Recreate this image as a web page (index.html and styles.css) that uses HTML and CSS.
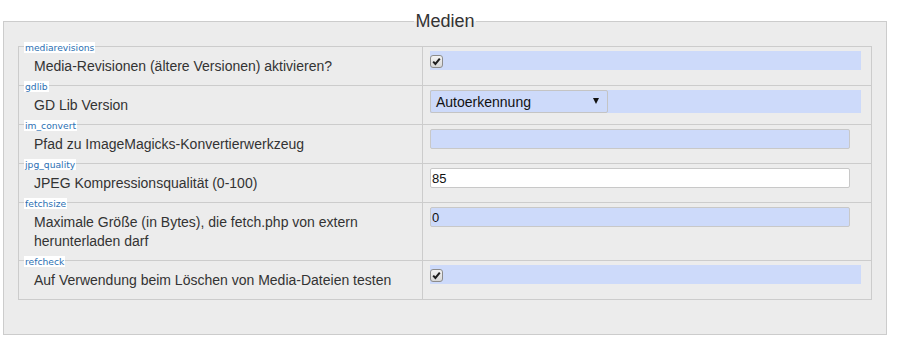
FILE: index.html
```html
<!DOCTYPE html>
<html lang="de">
<head>
<meta charset="utf-8">
<title>Medien</title>
<link rel="stylesheet" href="styles.css">
</head>
<body>
<fieldset class="panel">
  <legend class="title">Medien</legend>
  <table class="config">
    <colgroup><col class="col-label"><col class="col-value"></colgroup>
    <tr>
      <td class="label"><span class="key">mediarevisions</span><span class="text">Media-Revisionen (ältere Versionen) aktivieren?</span></td>
      <td class="value"><div class="band band-check"><span class="check"><svg width="13" height="13" viewBox="0 0 13 13"><defs><linearGradient id="cg" x1="0" y1="0" x2="0" y2="1"><stop offset="0" stop-color="#f4f4f4"/><stop offset="1" stop-color="#d6d6d6"/></linearGradient></defs><rect x="0.5" y="0.5" width="12" height="12" rx="2.5" fill="url(#cg)" stroke="#8c8c8c"/><path d="M3.2 6.6 L5.4 9 L9.8 3.6" fill="none" stroke="#1e1e1e" stroke-width="2"/></svg></span></div></td>
    </tr>
    <tr>
      <td class="label"><span class="key">gdlib</span><span class="text">GD Lib Version</span></td>
      <td class="value"><div class="band band-select"><span class="select"><span class="select-text">Autoerkennung</span><span class="arrow"></span></span></div></td>
    </tr>
    <tr>
      <td class="label"><span class="key">im_convert</span><span class="text">Pfad zu ImageMagicks-Konvertierwerkzeug</span></td>
      <td class="value"><input class="field field-default" type="text" value=""></td>
    </tr>
    <tr>
      <td class="label"><span class="key">jpg_quality</span><span class="text">JPEG Kompressionsqualität (0-100)</span></td>
      <td class="value"><input class="field" type="text" value="85"></td>
    </tr>
    <tr>
      <td class="label"><span class="key">fetchsize</span><span class="text">Maximale Größe (in Bytes), die fetch.php von extern herunterladen darf</span></td>
      <td class="value"><input class="field field-default" type="text" value="0"></td>
    </tr>
    <tr>
      <td class="label"><span class="key">refcheck</span><span class="text">Auf Verwendung beim Löschen von Media-Dateien testen</span></td>
      <td class="value"><div class="band band-check"><span class="check"><svg width="13" height="13" viewBox="0 0 13 13"><rect x="0.5" y="0.5" width="12" height="12" rx="2.5" fill="url(#cg)" stroke="#8c8c8c"/><path d="M3.2 6.6 L5.4 9 L9.8 3.6" fill="none" stroke="#1e1e1e" stroke-width="2"/></svg></span></div></td>
    </tr>
  </table>
</fieldset>
</body>
</html>
```
FILE: styles.css
```css
html, body {
  margin: 0;
  padding: 0;
  background: #ffffff;
}

body {
  font-family: "Liberation Sans", Arial, sans-serif;
  color: #333333;
}

.panel {
  margin: 10px 10px 0 3px;
  padding: 14px 14px 34px 14px;
  border: 1px solid #cccccc;
  background: #ececec;
  min-width: 0;
}

.title {
  margin: 0 auto;
  padding: 0 1px;
  font-size: 18px;
  line-height: 22px;
  color: #333333;
}

.config {
  width: 100%;
  border-collapse: collapse;
  table-layout: fixed;
}

.col-label {
  width: 404px;
}

.config td {
  border: 1px solid #cccccc;
  vertical-align: top;
}

.label {
  padding: 0 10px 9px 0;
}

.key {
  position: relative;
  display: block;
  width: fit-content;
  margin: -5px 0 0 5px;
  padding: 0 1px;
  background: #ffffff;
  color: #2b6fb3;
  font-family: "DejaVu Sans", Verdana, sans-serif;
  font-size: 9.2px;
  line-height: 11px;
}

.text {
  display: block;
  padding: 4px 0 0 15px;
  font-size: 14px;
  line-height: 19px;
}

.value {
  padding: 4px 10px 0 7px;
}

.band {
  background: #cddafa;
}

.band-check {
  height: 19px;
}

.check {
  display: block;
  width: 13px;
  height: 13px;
  padding-top: 4px;
}

.check svg {
  display: block;
}

.band-select {
  height: 23px;
}

.select {
  box-sizing: border-box;
  display: flex;
  align-items: center;
  justify-content: space-between;
  width: 178px;
  height: 23px;
  padding: 0 8px 0 5px;
  border: 1px solid #c4c4c4;
  border-radius: 2px;
  background: #cddafa;
  font-size: 14px;
  color: #111111;
}

.arrow {
  width: 0;
  height: 0;
  margin-top: -2px;
  border-left: 3.5px solid transparent;
  border-right: 3.5px solid transparent;
  border-top: 6px solid #111111;
}

.field {
  box-sizing: border-box;
  display: block;
  width: 420px;
  height: 20px;
  margin: 0;
  padding: 0 1px;
  border: 1px solid #c8c8c8;
  border-radius: 2px;
  background: #ffffff;
  font-family: "Liberation Sans", Arial, sans-serif;
  font-size: 13px;
  color: #111111;
  outline: none;
}

.field-default {
  background: #cddafa;
}
```
